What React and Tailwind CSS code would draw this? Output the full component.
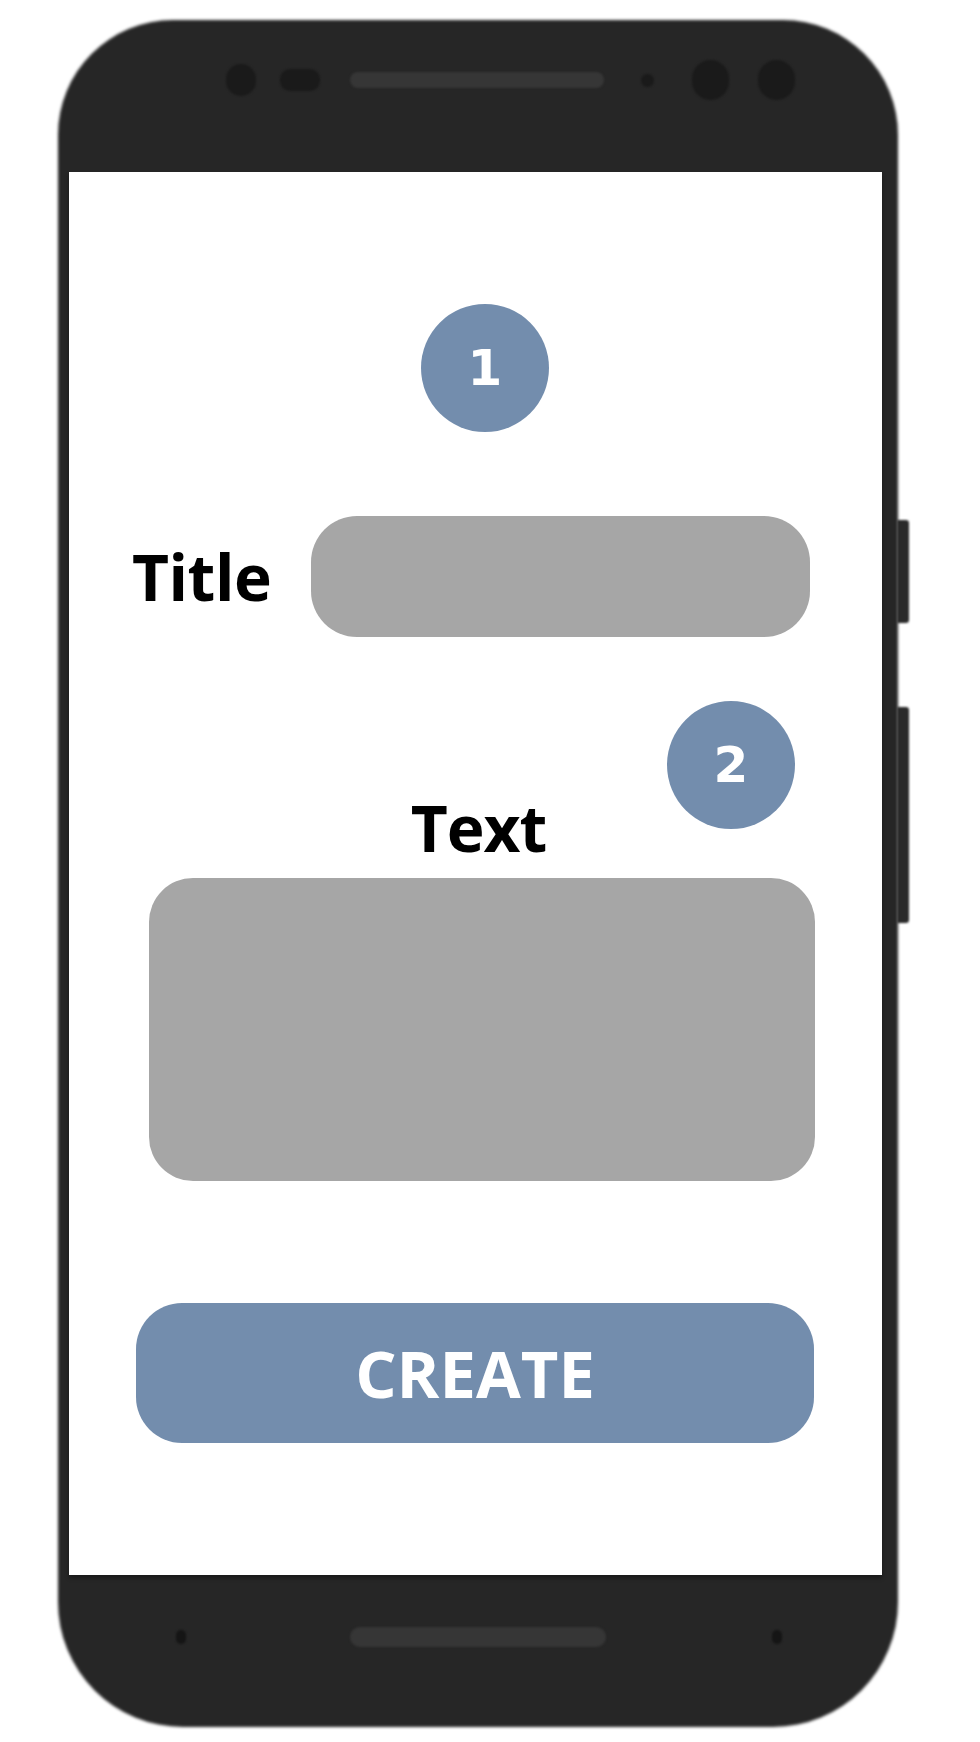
const font = { fontFamily: '"Open Sans", "Noto Sans", sans-serif' };
const digitFont = { fontFamily: '"DejaVu Sans", "Noto Sans", sans-serif' };

const Step = ({ n, className }) => (
    <div
        className={`w-[128px] h-[128px] rounded-full bg-[#738dad] flex items-center justify-center text-white text-[50px] font-bold leading-none ${className}`}
        style={digitFont}
    >
        {n}
    </div>
);

const App = () => {
    return (
        <div className="w-[980px] h-[1742px] bg-white pt-[20px] pl-[58px]" style={font}>
            <div className="relative w-[840px] h-[1707px] flex flex-col">
                {/* soft phone body, blurred edge like the mockup */}
                <div className="absolute inset-0 bg-[#262626] rounded-t-[115px] rounded-b-[125px] blur-[1.5px]"></div>

                {/* side buttons */}
                <div className="absolute -right-[11px] top-[500px] w-[12px] h-[103px] rounded-r-[3px] bg-[#2a2a2a] blur-[1px]"></div>
                <div className="absolute -right-[11px] top-[687px] w-[12px] h-[216px] rounded-r-[3px] bg-[#2a2a2a] blur-[1px]"></div>

                {/* top bezel */}
                <div className="relative h-[152px] flex items-start">
                    <div className="h-[120px] w-full flex items-center pl-[168px]">
                        <div className="w-[30px] h-[32px] rounded-full bg-[#1a1a1a] blur-[1px]"></div>
                        <div className="ml-[24px] w-[40px] h-[22px] rounded-[10px] bg-[#1a1a1a] blur-[1px]"></div>
                        <div className="ml-[30px] w-[254px] h-[16px] rounded-full bg-[#363636] blur-[1px]"></div>
                        <div className="ml-[37px] w-[13px] h-[13px] rounded-full bg-[#1a1a1a] blur-[1px]"></div>
                        <div className="ml-[38px] w-[37px] h-[40px] rounded-full bg-[#1a1a1a] blur-[1px]"></div>
                        <div className="ml-[29px] w-[37px] h-[40px] rounded-full bg-[#1a1a1a] blur-[1px]"></div>
                    </div>
                </div>

                {/* screen */}
                <div className="relative ml-[11px] mr-[16px] h-[1403px] bg-white flex flex-col shadow-[0_3px_4px_rgba(0,0,0,0.35)]">
                    <Step n="1" className="mt-[132px] ml-[352px] w-[127px] h-[127px]" />

                    <div className="mt-[84px] h-[121px] flex items-center">
                        <div className="w-[242px] pl-[63px] text-[64px] font-bold leading-none text-black tracking-[-0.5px]">Title</div>
                        <div className="w-[499px] h-[121px] rounded-[46px] bg-[#a6a6a6]"></div>
                    </div>

                    <Step n="2" className="mt-[64px] ml-[598px]" />

                    <div className="-mt-[33px] pl-[6px] text-center text-[64px] font-bold leading-none text-black tracking-[-1px]">Text</div>

                    <div className="mt-[18px] ml-[80px] w-[666px] h-[303px] rounded-[44px] bg-[#a6a6a6]"></div>

                    <button className="mt-[122px] ml-[67px] w-[678px] h-[140px] rounded-[46px] bg-[#738dad] text-white text-[65px] font-bold leading-none flex items-center justify-center">
                        CREATE
                    </button>
                </div>

                {/* bottom bezel */}
                <div className="relative h-[152px] flex items-start">
                    <div className="h-[124px] w-full flex items-center pl-[118px]">
                        <div className="w-[10px] h-[14px] rounded-full bg-[#151515] blur-[1px]"></div>
                        <div className="ml-[164px] w-[256px] h-[20px] rounded-full bg-[#363636] blur-[1px]"></div>
                        <div className="ml-[166px] w-[10px] h-[14px] rounded-full bg-[#151515] blur-[1px]"></div>
                    </div>
                </div>
            </div>
        </div>
    );
};

export default App;
